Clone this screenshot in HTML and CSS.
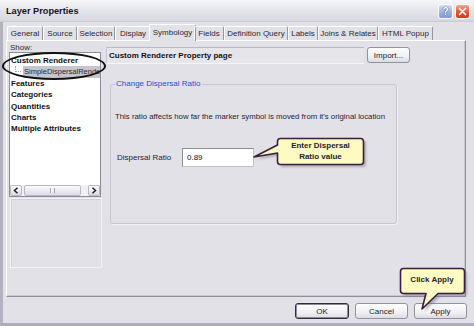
FILE: index.html
```html
<!DOCTYPE html>
<html>
<head>
<meta charset="utf-8">
<title>Layer Properties</title>
<link rel="stylesheet" href="styles.css">
</head>
<body>
<div class="window">
  <div class="titlebar">
    <span class="title">Layer Properties</span>
    <div class="tb-buttons">
      <span class="tb-btn help">?</span>
      <span class="tb-btn close"><svg width="9" height="9" viewBox="0 0 9 9"><path d="M1.5 1.5 L7.5 7.5 M7.5 1.5 L1.5 7.5" stroke="#fff" stroke-width="1.7" stroke-linecap="round"/></svg></span>
    </div>
  </div>
  <div class="body">
    <div class="tabs">
      <span class="tab w-general">General</span>
      <span class="tab w-source">Source</span>
      <span class="tab w-selection">Selection</span>
      <span class="tab w-display">Display</span>
      <span class="tab sel w-symbology">Symbology</span>
      <span class="tab w-fields">Fields</span>
      <span class="tab w-defq">Definition Query</span>
      <span class="tab w-labels">Labels</span>
      <span class="tab w-joins">Joins &amp; Relates</span>
      <span class="tab w-html">HTML Popup</span>
    </div>
    <div class="panel">
      <div class="left">
        <div class="show-label">Show:</div>
        <div class="listbox">
          <div class="items">
            <div class="item bold">Custom Renderer</div>
            <div class="item child"><span class="tree"></span><span class="selected">SimpleDispersalRende</span></div>
            <div class="item bold">Features</div>
            <div class="item bold">Categories</div>
            <div class="item bold">Quantities</div>
            <div class="item bold">Charts</div>
            <div class="item bold">Multiple Attributes</div>
          </div>
          <div class="hscroll">
            <span class="sb-btn"><svg width="6" height="7" viewBox="0 0 6 7"><path d="M4.5 0.8 L1.5 3.5 L4.5 6.2" fill="none" stroke="#1e1d26" stroke-width="1.5"/></svg></span>
            <span class="sb-track"><span class="sb-thumb"><span class="grip"></span></span></span>
            <span class="sb-btn"><svg width="6" height="7" viewBox="0 0 6 7"><path d="M1.5 0.8 L4.5 3.5 L1.5 6.2" fill="none" stroke="#1e1d26" stroke-width="1.5"/></svg></span>
          </div>
        </div>
        <div class="preview"></div>
      </div>
      <div class="right">
        <div class="header-row">
          <div class="header">Custom Renderer Property page</div>
          <button class="btn import">Import...</button>
        </div>
        <fieldset class="group">
          <legend>Change Dispersal Ratio</legend>
          <p class="desc">This ratio affects how far the marker symbol is moved from it's original location</p>
          <div class="field-row">
            <span class="field-label">Dispersal Ratio</span>
            <span class="input">0.89</span>
          </div>
        </fieldset>
      </div>
    </div>
    <div class="buttons">
      <button class="btn dlg ok">OK</button>
      <button class="btn dlg">Cancel</button>
      <button class="btn dlg">Apply</button>
    </div>
  </div>

  <div class="ellipse"></div>

  <div class="callout c1">
    <svg class="callout-shape" width="120" height="38" viewBox="0 0 120 38">
      <defs><filter id="blur1" x="-10%" y="-20%" width="130%" height="150%"><feGaussianBlur stdDeviation="1"/></filter></defs>
      <path transform="translate(2.5 2.5)" filter="url(#blur1)" fill="#6b6478" fill-opacity="0.45" d="M30.5 4.5 H110.5 Q113.5 4.5 113.5 7.5 V27.5 Q113.5 30.5 110.5 30.5 H30.5 Q27.5 30.5 27.5 27.5 V19 L4 23 L27.5 11 V7.5 Q27.5 4.5 30.5 4.5 Z"/>
      <path fill="#fdfbc2" stroke="#3b1f3f" stroke-width="1.6" stroke-linejoin="round" d="M30.5 4.5 H110.5 Q113.5 4.5 113.5 7.5 V27.5 Q113.5 30.5 110.5 30.5 H30.5 Q27.5 30.5 27.5 27.5 V19 L4 23 L27.5 11 V7.5 Q27.5 4.5 30.5 4.5 Z"/>
    </svg>
    <span class="callout-text">Enter Dispersal<br>Ratio value</span>
  </div>

  <div class="callout c2">
    <svg class="callout-shape" width="76" height="50" viewBox="0 0 76 50">
      <defs><filter id="blur2" x="-10%" y="-10%" width="130%" height="130%"><feGaussianBlur stdDeviation="1"/></filter></defs>
      <path transform="translate(2.5 2.5)" filter="url(#blur2)" fill="#6b6478" fill-opacity="0.45" d="M7.5 4.5 H65.5 Q68.5 4.5 68.5 7.5 V26.5 Q68.5 29.5 65.5 29.5 H42 L26 45 L30 29.5 H7.5 Q4.5 29.5 4.5 26.5 V7.5 Q4.5 4.5 7.5 4.5 Z"/>
      <path fill="#fdfbc2" stroke="#3b1f3f" stroke-width="1.6" stroke-linejoin="round" d="M7.5 4.5 H65.5 Q68.5 4.5 68.5 7.5 V26.5 Q68.5 29.5 65.5 29.5 H42 L26 45 L30 29.5 H7.5 Q4.5 29.5 4.5 26.5 V7.5 Q4.5 4.5 7.5 4.5 Z"/>
    </svg>
    <span class="callout-text">Click Apply</span>
  </div>
</div>
</body>
</html>
```

FILE: styles.css
```css
* { box-sizing: border-box; }
html, body { margin: 0; padding: 0; }
body {
  width: 474px;
  height: 326px;
  overflow: hidden;
  background: #e2e1e7;
  font-family: "Liberation Sans", Arial, sans-serif;
  font-size: 8px;
  color: #1d1b23;
}
.window {
  position: relative;
  width: 474px;
  height: 326px;
  display: flex;
  flex-direction: column;
  background: #e2e1e7;
  overflow: hidden;
}

/* title bar */
.titlebar {
  height: 22px;
  flex: none;
  display: flex;
  align-items: center;
  padding: 1px 4px 0 6px;
  background: linear-gradient(#f7f7fa, #e6e6ec 45%, #d7d7e0);
  border-bottom: 1px solid #cbcad4;
}
.title {
  flex: 1;
  font-weight: bold;
  font-size: 9.2px;
  color: #16151d;
}
.tb-buttons { display: flex; gap: 2px; }
.tb-btn {
  width: 15px;
  height: 15px;
  border-radius: 3px;
  border: 1px solid #fdfdff;
  display: flex;
  align-items: center;
  justify-content: center;
}
.help {
  background: linear-gradient(#d3def5, #9aaedf 60%, #8499d2);
  color: #fff;
  font-weight: bold;
  font-size: 10px;
  text-shadow: 0 0 1px #34487f, 0 0 1px #34487f;
}
.close {
  background: linear-gradient(#f6a48c, #e35634 55%, #c93d22);
}

/* body */
.body {
  flex: 1;
  display: flex;
  flex-direction: column;
  border-left: 3px solid #b3b2be;
  border-bottom: 3px solid #afaeba;
  padding-top: 2px;
}

/* tabs */
.tabs {
  display: flex;
  align-items: flex-end;
  height: 16px;
  margin-left: 4px;
  position: relative;
  z-index: 1;
}
.tab {
  height: 14px;
  display: flex;
  align-items: center;
  justify-content: center;
  border-top: 1px solid #fff;
  border-left: 1px solid #fff;
  border-right: 1px solid #95949f;
  border-radius: 2px 2px 0 0;
  color: #2a2831;
  white-space: nowrap;
}
.tab.sel {
  height: 17px;
  margin: 0 -2px -1px;
  background: #e2e1e7;
  padding-bottom: 1px;
}
.w-general { width: 36px; }
.w-source { width: 34px; }
.w-selection { width: 38px; }
.w-display { width: 36px; }
.w-symbology { width: 47px; }
.w-fields { width: 30px; }
.w-defq { width: 64px; }
.w-labels { width: 30px; }
.w-joins { width: 60px; }
.w-html { width: 55px; }

/* panel */
.panel {
  margin-left: 3px;
  width: 460px;
  height: 257px;
  flex: none;
  border: 1px solid;
  border-color: #fff #8f8e9a #8f8e9a #fff;
  box-shadow: inset -1px -1px 0 #c9c8d1;
  display: flex;
  padding: 2px 0 0 2px;
}
.left {
  width: 93px;
  display: flex;
  flex-direction: column;
}
.show-label {
  height: 9px;
  line-height: 9px;
  padding-left: 1px;
  color: #2a2830;
}
.listbox {
  width: 92px;
  height: 145px;
  border: 1px solid #8d8c99;
  background: #fff;
  display: flex;
  flex-direction: column;
  overflow: hidden;
}
.items {
  flex: 1;
  padding-top: 2px;
  overflow: hidden;
}
.item {
  height: 11.4px;
  line-height: 11.4px;
  padding-left: 1px;
  white-space: nowrap;
  color: #111016;
}
.item.bold { font-weight: bold; }
.item.child {
  display: flex;
  align-items: flex-start;
}
.tree {
  flex: none;
  width: 6px;
  height: 6px;
  margin: 0 2px 0 4px;
  border-left: 1px dotted #a9a8b2;
  border-bottom: 1px dotted #a9a8b2;
}
.selected {
  flex: 1;
  background: #c6c5cf;
  padding-left: 1px;
  font-size: 7.5px;
  color: #2a2834;
}
.hscroll {
  height: 11px;
  flex: none;
  display: flex;
  background: #f1f1f4;
}
.sb-btn {
  width: 12px;
  height: 11px;
  flex: none;
  border: 1px solid #b9b8c7;
  border-radius: 2px;
  background: linear-gradient(#fbfbfd, #dcdbe6);
  display: flex;
  align-items: center;
  justify-content: center;
}
.sb-track {
  flex: 1;
  display: flex;
}
.sb-thumb {
  width: 57px;
  margin-left: 2px;
  border: 1px solid #b9b8c7;
  border-radius: 2px;
  background: linear-gradient(#fbfbfd, #dddce7);
  display: flex;
  align-items: center;
  justify-content: center;
}
.grip {
  width: 5px;
  height: 5px;
  border-left: 1px solid #a8a7b6;
  border-right: 1px solid #a8a7b6;
  box-shadow: inset 1px 0 0 #fff;
}
.preview {
  width: 92px;
  height: 70px;
  margin: 1px 0 0 1px;
  border: 1px solid #f3f3f6;
  box-shadow: inset 1px 1px 0 #d2d1d9;
}

/* right side */
.right {
  margin-left: 4px;
  display: flex;
  flex-direction: column;
}
.header-row {
  margin-top: 4px;
  display: flex;
  gap: 3px;
}
.header {
  width: 258px;
  height: 17px;
  display: flex;
  align-items: center;
  padding-left: 2px;
  font-weight: bold;
  color: #121118;
  background: #e6e5ea;
  border-top: 1px solid #b9b8c3;
  border-left: 1px solid #c9c8d1;
  border-bottom: 1px solid #f6f6f8;
}
.btn {
  font: inherit;
  padding: 0;
  margin: 0;
  height: 16px;
  display: flex;
  align-items: center;
  justify-content: center;
  border: 1px solid #93929f;
  border-radius: 3px;
  background: linear-gradient(#fefefe, #efeef3 65%, #dcdbe3);
  color: #1d1b23;
}
.import { width: 43px; }
.group {
  margin: 15px 0 0 4px;
  width: 287px;
  height: 145px;
  padding: 0 4px;
  border: 1px solid #c7c6d0;
  border-radius: 3px;
  box-shadow: 1px 1px 0 #f2f2f5;
}
.group legend {
  padding: 0 1px;
  color: #2350cf;
  line-height: 10px;
}
.desc {
  margin: 23px 0 0;
  line-height: 10px;
  font-size: 7.8px;
  white-space: nowrap;
  color: #2a2331;
}
.field-row {
  margin-top: 26px;
  display: flex;
  align-items: center;
}
.field-label {
  width: 67px;
  padding-left: 2px;
  color: #2a2331;
}
.input {
  width: 72px;
  height: 19px;
  display: flex;
  align-items: center;
  padding-left: 4px;
  background: #fff;
  border: 1px solid;
  border-color: #8c8b98 #c2c1cb #c2c1cb #8c8b98;
  color: #111016;
}

/* dialog buttons */
.buttons {
  margin-top: 6px;
  display: flex;
  justify-content: flex-end;
  gap: 6px;
  padding-right: 7px;
}
.dlg { width: 53px; }
.ok {
  width: 54px;
  border-color: #2f2e39;
  box-shadow: inset 0 0 0 1px #8d8c9a;
}

/* overlays */
.ellipse {
  position: absolute;
  left: 2px;
  top: 52px;
  width: 104px;
  height: 28px;
  border: 2px solid #111;
  border-radius: 50%;
}
.callout {
  position: absolute;
  display: flex;
  align-items: center;
  justify-content: center;
}
.callout-shape {
  position: absolute;
  overflow: visible;
}
.callout-text {
  position: relative;
  font-weight: bold;
  text-align: center;
  line-height: 10.5px;
  color: #2b1b2e;
}
.c1 { left: 277px; top: 138px; width: 87px; height: 27px; }
.c1 .callout-shape { left: -27px; top: -4px; }
.c2 { left: 400px; top: 268px; width: 64px; height: 25px; }
.c2 .callout-shape { left: -4px; top: -4px; }
```
